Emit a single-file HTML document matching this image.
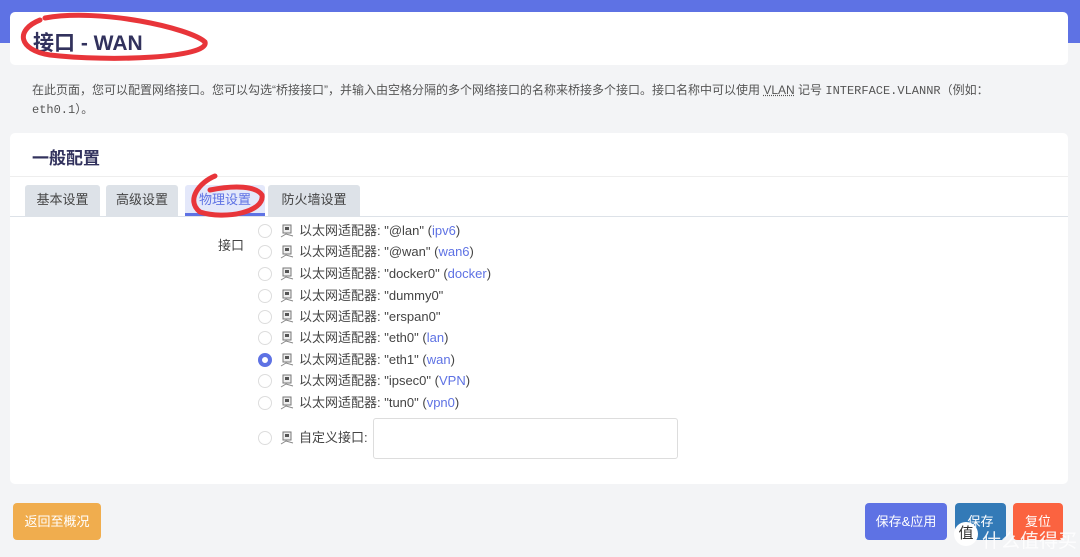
<!DOCTYPE html>
<html><head><meta charset="utf-8"><style>
*{box-sizing:border-box;margin:0;padding:0}
body{width:1080px;height:557px;overflow:hidden;background:#f3f4f6;font-family:"Liberation Sans","Noto Sans CJK SC",sans-serif;color:#32325d;position:relative}
.band{position:absolute;left:0;top:0;width:1080px;height:43px;background:#5e72e4}
.card{position:absolute;background:#fff;border-radius:5px}
.abs{position:absolute;white-space:nowrap}
.tab{position:absolute;top:185px;height:31px;background:#dde2e8;font-size:13px;color:#444;text-align:center;line-height:29px;border-radius:3px 3px 0 0}
.row{position:absolute;left:258px;height:20px;font-size:13px;color:#444;white-space:nowrap;line-height:20px}
.rad{position:absolute;left:0;top:3px;width:14px;height:14px;border:1px solid #ddd;border-radius:50%;background:#fff}
.ico{position:absolute;left:22px;top:3px;width:14px;height:14px}
.txt{position:absolute;left:41px;top:0}
.b{color:#5e72e4}
.btn{position:absolute;top:503px;height:37px;border-radius:4px;color:#fff;font-size:13px;text-align:center;line-height:37px}
</style></head><body>
<div class="band"></div>
<div class="card" style="left:10px;top:12px;width:1058px;height:53px"></div>
<div class="abs" style="left:33px;top:27px;font-size:21px;font-weight:bold;color:#32325d">接口 - WAN</div>
<div class="abs" style="left:32px;top:81px;font-size:12px;color:#555;line-height:18px">在此页面，您可以配置网络接口。您可以勾选“桥接接口”，并输入由空格分隔的多个网络接口的名称来桥接多个接口。接口名称中可以使用 <span style="text-decoration:underline dotted">VLAN</span> 记号 <span style="font-family:'Liberation Mono',monospace">INTERFACE.VLANNR</span>（例如：<br><span style="font-family:'Liberation Mono',monospace">eth0.1</span>）。</div>
<div class="card" style="left:10px;top:133px;width:1058px;height:351px"></div>
<div class="abs" style="left:32px;top:144px;font-size:17px;font-weight:bold">一般配置</div>
<div class="abs" style="left:10px;top:176px;width:1058px;height:1px;background:#eee"></div>
<div class="tab" style="left:25px;width:75px">基本设置</div>
<div class="tab" style="left:106px;width:72px">高级设置</div>
<div class="tab" style="left:185px;width:80px;background:#e4e8fa;color:#5e72e4;border-bottom:3px solid #5e72e4">物理设置</div>
<div class="tab" style="left:268px;width:92px">防火墙设置</div>
<div class="abs" style="left:10px;top:216px;width:1058px;height:1px;background:#dde2e8"></div>
<div class="abs" style="left:218px;top:235px;font-size:13px;color:#444">接口</div>
<svg width="0" height="0" style="position:absolute"><defs><symbol id="n" viewBox="0 0 14 14"><rect x="3" y="1" width="8" height="8" fill="#eee" stroke="#777"/><rect x="5" y="3" width="4" height="3" fill="#555"/><path d="M1 13 L6 10 L13 12" stroke="#888" fill="none"/></symbol></defs></svg>
<div class="row" style="top:221px"><span class="rad"></span><svg class="ico"><use href="#n"/></svg><span class="txt">以太网适配器: "@lan" (<span class="b">ipv6</span>)</span></div>
<div class="row" style="top:242px"><span class="rad"></span><svg class="ico"><use href="#n"/></svg><span class="txt">以太网适配器: "@wan" (<span class="b">wan6</span>)</span></div>
<div class="row" style="top:264px"><span class="rad"></span><svg class="ico"><use href="#n"/></svg><span class="txt">以太网适配器: "docker0" (<span class="b">docker</span>)</span></div>
<div class="row" style="top:286px"><span class="rad"></span><svg class="ico"><use href="#n"/></svg><span class="txt">以太网适配器: "dummy0"</span></div>
<div class="row" style="top:307px"><span class="rad"></span><svg class="ico"><use href="#n"/></svg><span class="txt">以太网适配器: "erspan0"</span></div>
<div class="row" style="top:328px"><span class="rad"></span><svg class="ico"><use href="#n"/></svg><span class="txt">以太网适配器: "eth0" (<span class="b">lan</span>)</span></div>
<div class="row" style="top:350px"><span class="rad" style="border:4px solid #5e72e4"></span><svg class="ico"><use href="#n"/></svg><span class="txt">以太网适配器: "eth1" (<span class="b">wan</span>)</span></div>
<div class="row" style="top:371px"><span class="rad"></span><svg class="ico"><use href="#n"/></svg><span class="txt">以太网适配器: "ipsec0" (<span class="b">VPN</span>)</span></div>
<div class="row" style="top:393px"><span class="rad"></span><svg class="ico"><use href="#n"/></svg><span class="txt">以太网适配器: "tun0" (<span class="b">vpn0</span>)</span></div>
<div class="row" style="top:428px"><span class="rad"></span><svg class="ico"><use href="#n"/></svg><span class="txt">自定义接口:</span></div>
<div class="abs" style="left:373px;top:418px;width:305px;height:41px;border:1px solid #ddd;border-radius:3px;background:#fff"></div>
<div class="btn" style="left:13px;width:88px;background:#f0ad4e">返回至概况</div>
<div class="btn" style="left:865px;width:82px;background:#5e72e4">保存&amp;应用</div>
<div class="btn" style="left:955px;width:51px;background:#337ab7">保存</div>
<div class="btn" style="left:1013px;width:50px;background:#fb6340">复位</div>
<div class="abs" style="left:954px;top:522px;width:24px;height:24px;border-radius:50%;background:#fff;color:#333;font-size:15px;text-align:center;line-height:24px">值</div>
<div class="abs" style="left:982px;top:526px;font-size:19px;color:#fff;opacity:.9">什么值得买</div>
<svg class="abs" style="left:0;top:0" width="1080" height="557"><g fill="none" stroke="#e8353a" stroke-width="5" stroke-linecap="round">
<path d="M45 18 C100 8 190 28 205 42 C210 58 110 62 50 55 C18 50 15 30 40 20"/>
<path d="M215 176 C200 182 185 200 200 212 C225 220 265 212 262 195 C256 186 235 185 210 190"/>
</g></svg>
</body></html>
